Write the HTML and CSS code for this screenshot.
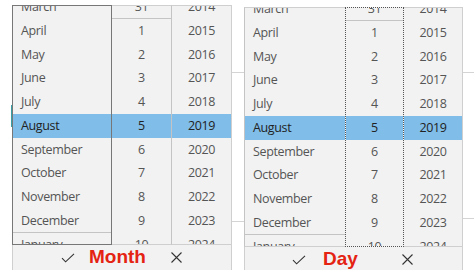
FILE: index.html
```html
<!DOCTYPE html>
<html>
<head>
<meta charset="utf-8">
<link rel="stylesheet" href="styles.css">
</head>
<body>
<div class="backdrop">
  <span class="bline b1"></span>
  <span class="bline b2"></span>
  <span class="bline b3"></span>
  <span class="bline b4"></span>
  <span class="teal"></span>
</div>
<div class="wrap">
  <div class="panel">
    <div class="cols">
      <div class="col month focus-solid">
        <div class="list">
          <div class="row">March</div>
          <div class="row">April</div>
          <div class="row">May</div>
          <div class="row">June</div>
          <div class="row">July</div>
          <div class="row sel">August</div>
          <div class="row">September</div>
          <div class="row">October</div>
          <div class="row">November</div>
          <div class="row sep">December</div>
          <div class="row">January</div>
        </div>
      </div>
      <div class="col day">
        <div class="list">
          <div class="row sep">31</div>
          <div class="row">1</div>
          <div class="row">2</div>
          <div class="row">3</div>
          <div class="row">4</div>
          <div class="row sel">5</div>
          <div class="row">6</div>
          <div class="row">7</div>
          <div class="row">8</div>
          <div class="row">9</div>
          <div class="row">10</div>
        </div>
      </div>
      <div class="col year">
        <div class="list">
          <div class="row">2014</div>
          <div class="row">2015</div>
          <div class="row">2016</div>
          <div class="row">2017</div>
          <div class="row">2018</div>
          <div class="row sel">2019</div>
          <div class="row">2020</div>
          <div class="row">2021</div>
          <div class="row">2022</div>
          <div class="row">2023</div>
          <div class="row">2024</div>
        </div>
      </div>
    </div>
    <div class="foot">
      <div class="btn"><svg width="14" height="10" viewBox="0 0 14 10"><path d="M1 5.2 L4.6 8.8 L13 0.8" fill="none" stroke="#333" stroke-width="1.1"/></svg></div>
      <div class="btn"><svg width="11" height="11" viewBox="0 0 11 11"><path d="M0.5 0.5 L10.5 10.5 M10.5 0.5 L0.5 10.5" fill="none" stroke="#333" stroke-width="1.1"/></svg></div>
      <span class="label label-month">Month</span>
    </div>
  </div>

  <div class="panel right">
    <div class="cols">
      <div class="col month">
        <div class="list">
          <div class="row">March</div>
          <div class="row">April</div>
          <div class="row">May</div>
          <div class="row">June</div>
          <div class="row">July</div>
          <div class="row sel">August</div>
          <div class="row">September</div>
          <div class="row">October</div>
          <div class="row">November</div>
          <div class="row sep">December</div>
          <div class="row">January</div>
        </div>
      </div>
      <div class="col day focus-dotted">
        <div class="list">
          <div class="row sep">31</div>
          <div class="row">1</div>
          <div class="row">2</div>
          <div class="row">3</div>
          <div class="row">4</div>
          <div class="row sel">5</div>
          <div class="row">6</div>
          <div class="row">7</div>
          <div class="row">8</div>
          <div class="row">9</div>
          <div class="row">10</div>
        </div>
      </div>
      <div class="col year">
        <div class="list">
          <div class="row">2014</div>
          <div class="row">2015</div>
          <div class="row">2016</div>
          <div class="row">2017</div>
          <div class="row">2018</div>
          <div class="row sel">2019</div>
          <div class="row">2020</div>
          <div class="row">2021</div>
          <div class="row">2022</div>
          <div class="row">2023</div>
          <div class="row">2024</div>
        </div>
      </div>
    </div>
    <div class="foot">
      <div class="btn"><svg width="14" height="10" viewBox="0 0 14 10"><path d="M1 5.2 L4.6 8.8 L13 0.8" fill="none" stroke="#333" stroke-width="1.1"/></svg></div>
      <div class="btn"><svg width="11" height="11" viewBox="0 0 11 11"><path d="M0.5 0.5 L10.5 10.5 M10.5 0.5 L0.5 10.5" fill="none" stroke="#333" stroke-width="1.1"/></svg></div>
      <span class="label label-day">Day</span>
    </div>
  </div>
</div>
</body>
</html>
```

FILE: styles.css
```css
html, body {
  margin: 0;
  padding: 0;
  background: #ffffff;
  overflow: hidden;
}
body {
  position: relative;
  width: 474px;
  height: 270px;
  font-family: "Open Sans", "Noto Sans", sans-serif;
  font-size: 12.5px;
  letter-spacing: -0.35px;
  color: #555555;
}
.backdrop {
  position: absolute;
  inset: 0;
}
.bline {
  position: absolute;
  height: 1px;
  background: #d4d4d4;
}
.b1 { left: 232px; top: 72px; width: 12px; }
.b2 { left: 232px; top: 221px; width: 12px; }
.b3 { left: 463px; top: 72px; width: 11px; }
.b4 { left: 463px; top: 218px; width: 11px; }
.teal {
  position: absolute;
  left: 11px;
  top: 105px;
  width: 1px;
  height: 22px;
  background: #3aa0a8;
}
.wrap {
  position: relative;
  display: flex;
  gap: 12px;
  padding-left: 12px;
  padding-top: 5px;
}
.panel {
  width: 220px;
  display: flex;
  flex-direction: column;
  background: #f2f2f2;
}
.panel.right {
  width: 219px;
  margin-top: 2px;
}
.cols {
  display: flex;
  height: 240px;
}
.col {
  overflow: hidden;
  box-sizing: border-box;
  border-top: 1px solid #cfcfcf;
  border-bottom: 1px solid #cfcfcf;
}
.col.month {
  width: 100px;
  border-left: 1px solid #c4c4c4;
}
.col.day {
  width: 60px;
  border-right: 1px solid #c4c4c4;
}
.col.year {
  flex: 1;
  border-right: 1px solid #cfcfcf;
}
.panel.right .col.month { width: 101px; }
.panel.right .col.day { width: 59px; border-right: none; }
.focus-solid {
  border: 1px solid #777777 !important;
}
.focus-dotted {
  border: 1px dotted #555555 !important;
}
.list {
  margin-top: -11px;
}
.row {
  height: 23.75px;
  line-height: 23.75px;
  white-space: nowrap;
}
.month .row { padding-left: 8px; }
.day .row, .year .row { text-align: center; }
.row.sel {
  background: #80bde8;
  color: #222222;
}
.row.sep {
  box-shadow: inset 0 -1px 0 #c4c4c4;
}
.foot {
  position: relative;
  height: 25px;
  display: flex;
  box-sizing: border-box;
  border-left: 1px solid #cfcfcf;
  border-right: 1px solid #cfcfcf;
}
.btn {
  flex: 1;
  display: flex;
  align-items: center;
  justify-content: center;
}
.label {
  position: absolute;
  top: 1px;
  font-family: "Liberation Sans", Arial, sans-serif;
  font-weight: bold;
  font-size: 19px;
  line-height: 22px;
  letter-spacing: 0;
  color: #e42313;
}
.label-month { left: 76px; }
.label-day { left: 78px; }
```
